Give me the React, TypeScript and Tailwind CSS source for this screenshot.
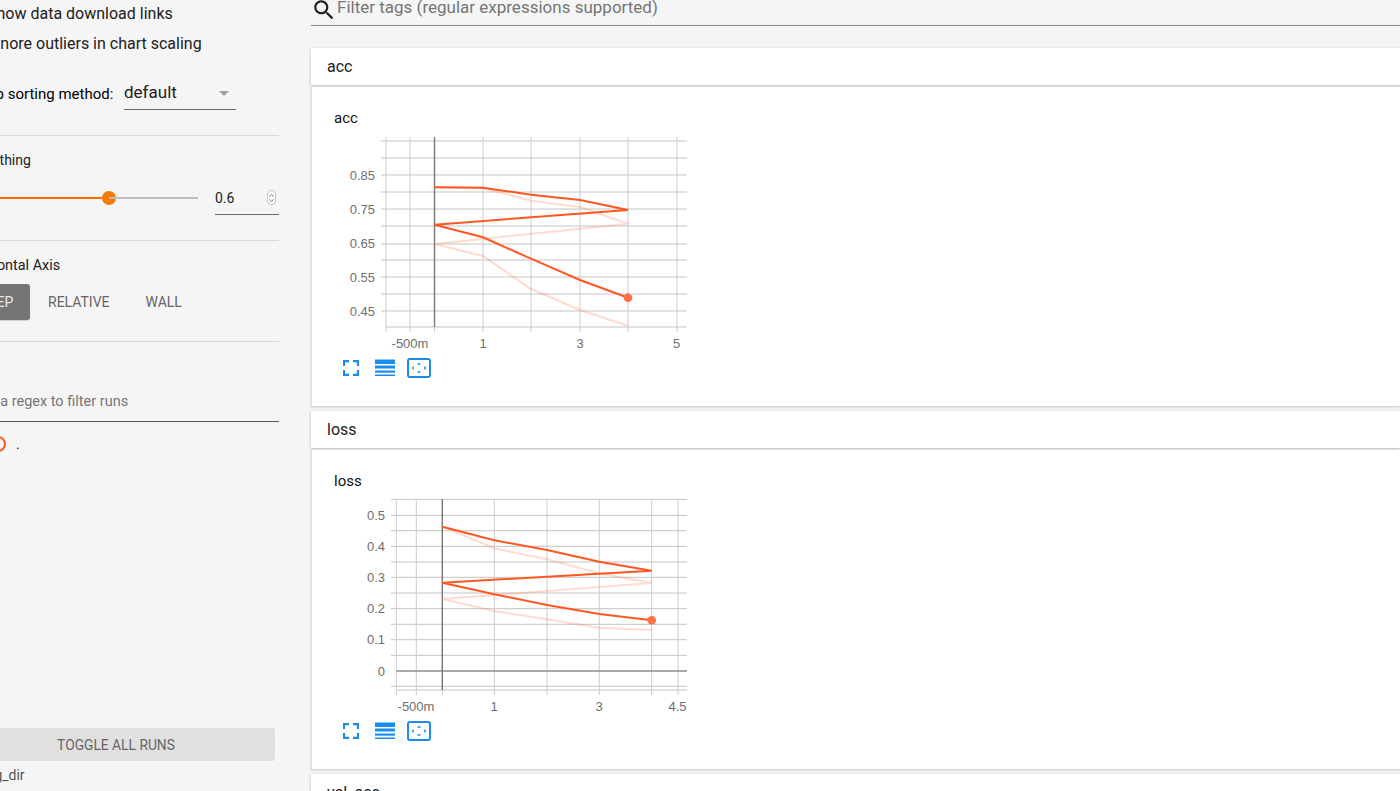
import { Fragment } from "react"

interface ChartData {
  viewBox: string
  width: number
  height: number
  xGrid: number[]
  yGrid: number[]
  xRange: [number, number]
  yRange: [number, number]
  xAxisAt: number
  zeroAt?: number
  yLabels: { y: number; text: string }[]
  xLabels: { x: number; text: string }[]
  xLabelY: number
  yLabelX: number
  dark: string
  light: string
  dot: [number, number]
}

const accChart: ChartData = {
  viewBox: "330 130 360 222",
  width: 360,
  height: 222,
  xGrid: [386, 410, 483, 531, 580, 628, 677],
  yGrid: [141, 158, 175, 192, 209, 226, 244, 260, 277, 294, 311],
  xRange: [381, 687],
  yRange: [137, 332],
  xAxisAt: 434.5,
  yLabels: [
    { y: 175, text: "0.85" },
    { y: 209, text: "0.75" },
    { y: 243, text: "0.65" },
    { y: 277, text: "0.55" },
    { y: 311, text: "0.45" },
  ],
  xLabels: [
    { x: 410, text: "-500m" },
    { x: 483, text: "1" },
    { x: 580, text: "3" },
    { x: 676.5, text: "5" },
  ],
  xLabelY: 343,
  yLabelX: 375,
  dark: "434.5,187.3 483,187.7 531,194.7 580,200 628,210 434.5,224.7 483,237.3 531,258.7 580,280 628,297.7",
  light: "434.5,187.3 483,188 531,200.7 580,207 628,223.7 434.5,244 483,256 531,289 580,310 628,325.7",
  dot: [628, 297.7],
}

const lossChart: ChartData = {
  viewBox: "330 493 360 222",
  width: 360,
  height: 222,
  xGrid: [396.3, 416.3, 494.3, 547, 599.3, 651.7, 678],
  yGrid: [499.3, 515.3, 530.7, 546.3, 562, 577.3, 593, 608.7, 624.3, 639.7, 655.3, 686.3],
  xRange: [391, 687],
  yRange: [499, 695],
  xAxisAt: 442.3,
  zeroAt: 671,
  yLabels: [
    { y: 515, text: "0.5" },
    { y: 546, text: "0.4" },
    { y: 577, text: "0.3" },
    { y: 608, text: "0.2" },
    { y: 639, text: "0.1" },
    { y: 671, text: "0" },
  ],
  xLabels: [
    { x: 416, text: "-500m" },
    { x: 494, text: "1" },
    { x: 599, text: "3" },
    { x: 677.5, text: "4.5" },
  ],
  xLabelY: 706,
  yLabelX: 385,
  dark: "442.3,526.7 494.3,540.3 547,550 599.3,561.7 651.7,570.7 442.3,582.7 494.3,594.3 547,605 599.3,614 651.7,620.3",
  light: "442.3,526.7 494.3,548.3 547,559.3 599.3,573.3 651.7,583 442.3,599 494.3,611 547,619.3 599.3,627.7 651.7,630",
  dot: [651.7, 620.3],
}

function Chart({ data }: { data: ChartData }) {
  return (
    <svg viewBox={data.viewBox} width={data.width} height={data.height} className="block">
      {data.yGrid.map((y) => (
        <line key={y} x1={data.xRange[0]} x2={data.xRange[1]} y1={y} y2={y} stroke="#c4c4c4" strokeWidth="1" />
      ))}
      {data.xGrid.map((x) => (
        <line key={x} x1={x} x2={x} y1={data.yRange[0]} y2={data.yRange[1]} stroke="#cccccc" strokeWidth="1" />
      ))}
      <line x1={data.xGrid[0]} x2={data.xRange[1]} y1={data.yRange[1] - 5} y2={data.yRange[1] - 5} stroke="#c4c4c4" />
      {data.zeroAt && (
        <line x1={data.xGrid[0]} x2={data.xRange[1]} y1={data.zeroAt} y2={data.zeroAt} stroke="#8c8c8c" strokeWidth="1.5" />
      )}
      <line x1={data.xAxisAt} x2={data.xAxisAt} y1={data.yRange[0]} y2={data.yRange[1] - 5} stroke="#777" strokeWidth="1.4" />
      <line x1={data.xAxisAt} x2={data.xAxisAt} y1={data.yRange[1] - 5} y2={data.yRange[1]} stroke="#d0d0d0" />
      <polyline points={data.light} fill="none" stroke="#ff7043" strokeOpacity="0.25" strokeWidth="2" />
      <polyline points={data.dark} fill="none" stroke="#ff5722" strokeWidth="2" />
      <circle cx={data.dot[0]} cy={data.dot[1]} r="4.3" fill="#ff7043" />
      {data.yLabels.map((l) => (
        <text key={l.text} x={data.yLabelX} y={l.y + 4.5} textAnchor="end" fontSize="13" fill="#6e6e6e" fontFamily="Liberation Sans, sans-serif">
          {l.text}
        </text>
      ))}
      {data.xLabels.map((l) => (
        <text key={l.text} x={l.x} y={data.xLabelY + 4.5} textAnchor="middle" fontSize="13" fill="#6e6e6e" fontFamily="Liberation Sans, sans-serif">
          {l.text}
        </text>
      ))}
    </svg>
  )
}

function ChartTools() {
  return (
    <div className="flex items-center h-[20px] ml-[13px] text-[#1a8cf0]">
      {/* fullscreen */}
      <svg width="16" height="16" viewBox="0 0 16 16" fill="none" stroke="currentColor" strokeWidth="2.2">
        <path d="M1 6V1.2H6M10 1.2H15V6M15 10V14.8H10M6 14.8H1V10" />
      </svg>
      {/* list */}
      <svg width="20" height="18" viewBox="0 0 20 18" className="ml-[16px]" fill="currentColor">
        <rect x="0" y="0.5" width="20" height="4.5" />
        <rect x="0" y="6.5" width="20" height="3" />
        <rect x="0" y="11.5" width="20" height="2.2" />
        <rect x="0" y="15.5" width="20" height="1.5" />
      </svg>
      {/* fit domain */}
      <svg width="24" height="20" viewBox="0 0 24 20" className="ml-[12px]" fill="currentColor">
        <rect x="1" y="1" width="22" height="18" rx="2" fill="none" stroke="currentColor" strokeWidth="2" />
        <path d="M12 4.5l2 2.2h-4zM12 15.5l2-2.2h-4zM4.5 10l2.2-2v4zM19.5 10l-2.2-2v4z" />
      </svg>
    </div>
  )
}

function ChartSection({ name, data, last }: { name: string; data: ChartData; last?: boolean }) {
  return (
    <Fragment>
      <div className="h-[37px] flex items-center pl-[16px] bg-white text-base text-[#212121] shadow-[0_1px_3px_rgba(0,0,0,0.25)]">
        {name}
      </div>
      <div className={"mt-[2px] h-[319px] bg-white border-l border-[#e0e0e0] shadow-[0_1px_2px_rgba(0,0,0,0.2)] pl-[21px] pt-[21px] " + (last ? "" : "mb-[5px]")}>
        <div className="h-5 pl-[1px] text-[15px] leading-5 text-[#111]">{name}</div>
        <div className="mt-[2px] -ml-[3px]">
          <Chart data={data} />
        </div>
        <div className="mt-[6px] -ml-[3px]">
          <ChartTools />
        </div>
      </div>
    </Fragment>
  )
}

function Sidebar() {
  return (
    <aside className="w-[311px] shrink-0 overflow-hidden">
      <div className="w-[316px] -ml-[37px] pt-[2px] flex flex-col text-[#212121]">
        <div className="h-6 pl-[24px] text-base leading-6">Show data download links</div>
        <div className="mt-[6px] h-6 pl-[24px] text-base leading-6 whitespace-nowrap">Ignore outliers in chart scaling</div>

        <div className="mt-[20px] h-[34px] flex items-start">
          <span className="mt-[8px] -ml-[5px] w-[155px] shrink-0 text-[15px] leading-5 text-black whitespace-nowrap">Tooltip sorting method:</span>
          <div className="ml-[11px] w-[112px] h-[34px] border-b border-[#6b6b6b] flex items-start justify-between pr-[7px]">
            <span className="mt-[4px] text-[17px] leading-6">default</span>
            <span className="mt-[15px] w-0 h-0 border-x-[5.5px] border-x-transparent border-t-[5px] border-t-[#9e9e9e]" />
          </div>
        </div>

        <div className="mt-[25px] h-[1px] bg-[#d8d8d8]" />

        <div className="mt-[14px] h-5 text-sm leading-5">Smoothing</div>
        <div className="mt-[11px] h-[34px] flex items-start">
          <div className="mt-[9px] w-[235px] h-[16px] flex items-center">
            <div className="w-[146px] h-[2px] bg-[#ff6d00]" />
            <div className="w-[14px] h-[14px] rounded-full bg-[#f57c00] -ml-[7px] shrink-0" />
            <div className="flex-1 h-[2px] bg-[#bdbdbd] -ml-[7px]" />
          </div>
          <div className="ml-[17px] w-[64px] h-[34px] border-b border-[#6b6b6b] flex items-start justify-between pr-[3px]">
            <span className="mt-[7px] text-sm leading-5">0.6</span>
            <span className="mt-[9px] w-[9px] h-[15px] rounded-[4px] border border-[#c8c8c8] bg-[#f9f9f9] flex flex-col items-center justify-center gap-[2px]">
              <svg width="5" height="3" viewBox="0 0 5 3" fill="none" stroke="#555" strokeWidth="0.8"><path d="M0.5 2.5L2.5 0.5L4.5 2.5" /></svg>
              <svg width="5" height="3" viewBox="0 0 5 3" fill="none" stroke="#555" strokeWidth="0.8"><path d="M0.5 0.5L2.5 2.5L4.5 0.5" /></svg>
            </span>
          </div>
        </div>

        <div className="mt-[25px] h-[1px] bg-[#d8d8d8]" />

        <div className="mt-[15px] h-5 text-[14.4px] leading-5">Horizontal Axis</div>
        <div className="mt-[8px] h-9 flex items-center text-sm text-[#666]">
          <div className="w-[67px] h-9 flex items-center justify-center rounded-[3px] bg-[#757575] text-[#e8e8e8] shadow-[0_1px_1px_rgba(0,0,0,0.15)]">STEP</div>
          <span className="ml-[18px]">RELATIVE</span>
          <span className="ml-[36px]">WALL</span>
        </div>

        <div className="mt-[21px] h-[1px] bg-[#d8d8d8]" />

        <div className="mt-[43px] h-[37px] border-b border-[#555] text-[14.5px] leading-5 text-[#757575] pt-[7px] whitespace-nowrap">Write a regex to filter runs</div>

        <div className="mt-[12px] h-5 flex items-center">
          <span className="ml-[27px] w-[16px] h-[16px] rounded-full border-2 border-[#ff5722]" />
          <span className="ml-[10px] text-sm leading-5">.</span>
        </div>

        <div className="mt-[274px] -ml-[6px] mr-[4px] h-[33px] pt-[2px] rounded-[3px] bg-[#e0e0e0] flex items-center justify-center text-[13.8px] text-[#666]">
          TOGGLE ALL RUNS
        </div>
        <div className="mt-[4px] h-5 pl-[20px] text-sm leading-5 text-[#555]">log_dir</div>
      </div>
    </aside>
  )
}

export default function App() {
  return (
    <div className="flex h-[791px] w-[1400px] overflow-hidden bg-[#f5f5f5] font-[Roboto,sans-serif]">
      <Sidebar />
      <main className="flex-1 min-w-0">
        <div className="-mt-[5px] h-[31px] flex items-start border-b border-[#8c8c8c]">
          <svg width="26" height="26" viewBox="0 0 24 24" fill="#212121" className="mt-[2px] shrink-0">
            <path d="M15.5 14h-.79l-.28-.27C15.41 12.59 16 11.11 16 9.5 16 5.91 13.09 3 9.5 3S3 5.91 3 9.5 5.91 16 9.5 16c1.61 0 3.09-.59 4.23-1.57l.27.28v.79l5 4.99L20.49 19l-4.99-5zm-6 0C7.01 14 5 11.99 5 9.5S7.01 5 9.5 5 14 7.01 14 9.5 11.99 14 9.5 14z" />
          </svg>
          <span className="text-[17px] leading-6 text-[#757575]">Filter tags (regular expressions supported)</span>
        </div>
        <div className="mt-[22px]">
          <ChartSection name="acc" data={accChart} />
          <ChartSection name="loss" data={lossChart} />
          <ChartSection name="val_acc" data={accChart} last />
        </div>
      </main>
    </div>
  )
}
